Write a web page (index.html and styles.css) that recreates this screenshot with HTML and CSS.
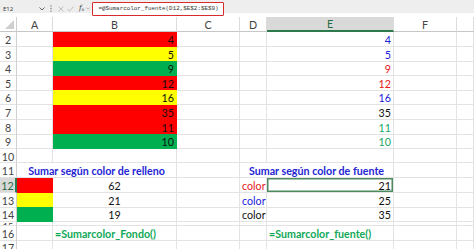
FILE: index.html
```html
<!DOCTYPE html>
<html lang="es">
<head>
<meta charset="utf-8">
<title>Sumar color</title>
<link rel="stylesheet" href="styles.css">
</head>
<body>
<div class="app">
  <div class="fbar">
    <div class="namebox">E12</div>
    <svg class="ico chev" width="6" height="4" viewBox="0 0 6 4"><path d="M0.5 0.5 L3 3 L5.5 0.5" fill="none" stroke="#555" stroke-width="0.9"/></svg>
    <svg class="ico dots" width="2" height="7" viewBox="0 0 2 7"><circle cx="1" cy="1" r="0.7" fill="#777"/><circle cx="1" cy="3.5" r="0.7" fill="#777"/><circle cx="1" cy="6" r="0.7" fill="#777"/></svg>
    <svg class="ico xmark" width="6" height="6" viewBox="0 0 6 6"><path d="M0.5 0.5 L5.5 5.5 M5.5 0.5 L0.5 5.5" fill="none" stroke="#b4b4b4" stroke-width="0.8"/></svg>
    <svg class="ico check" width="7" height="6" viewBox="0 0 7 6"><path d="M0.5 3.2 L2.5 5.2 L6.5 0.6" fill="none" stroke="#b4b4b4" stroke-width="0.8"/></svg>
    <span class="fx">f<sub>x</sub></span>
    <svg class="ico chev2" width="4" height="3" viewBox="0 0 4 3"><path d="M0.3 0.5 L2 2.3 L3.7 0.5" fill="none" stroke="#999" stroke-width="0.7"/></svg>
    <div class="formula">=@Sumarcolor_fuente(D12,$E$2:$E$9)</div>
  </div>

  <div class="sheet">
    <div class="row hdr">
      <div class="corner"><svg width="9" height="9" viewBox="0 0 9 9"><path d="M9 0 L9 9 L0 9 Z" fill="#cfcfcf"/></svg></div>
      <div class="ch">A</div><div class="ch">B</div><div class="ch">C</div><div class="ch">D</div><div class="ch sel">E</div><div class="ch">F</div><div class="ch"></div>
    </div>

    <div class="row r"><div class="rh">2</div><div class="c"></div><div class="c num f-red">4</div><div class="c"></div><div class="c"></div><div class="c num t-blue">4</div><div class="c"></div><div class="c"></div></div>
    <div class="row r"><div class="rh">3</div><div class="c"></div><div class="c num f-yellow">5</div><div class="c"></div><div class="c"></div><div class="c num t-blue">5</div><div class="c"></div><div class="c"></div></div>
    <div class="row r"><div class="rh">4</div><div class="c"></div><div class="c num f-green">9</div><div class="c"></div><div class="c"></div><div class="c num t-red">9</div><div class="c"></div><div class="c"></div></div>
    <div class="row r"><div class="rh">5</div><div class="c"></div><div class="c num f-red">12</div><div class="c"></div><div class="c"></div><div class="c num t-red">12</div><div class="c"></div><div class="c"></div></div>
    <div class="row r"><div class="rh">6</div><div class="c"></div><div class="c num f-yellow">16</div><div class="c"></div><div class="c"></div><div class="c num t-blue">16</div><div class="c"></div><div class="c"></div></div>
    <div class="row r"><div class="rh">7</div><div class="c"></div><div class="c num f-red">35</div><div class="c"></div><div class="c"></div><div class="c num t-black">35</div><div class="c"></div><div class="c"></div></div>
    <div class="row r"><div class="rh">8</div><div class="c"></div><div class="c num f-red">11</div><div class="c"></div><div class="c"></div><div class="c num t-green">11</div><div class="c"></div><div class="c"></div></div>
    <div class="row r"><div class="rh">9</div><div class="c"></div><div class="c num f-green">10</div><div class="c"></div><div class="c"></div><div class="c num t-green">10</div><div class="c"></div><div class="c"></div></div>
    <div class="row r"><div class="rh">10</div><div class="c"></div><div class="c"></div><div class="c"></div><div class="c"></div><div class="c"></div><div class="c"></div><div class="c"></div></div>
    <div class="row r"><div class="rh">11</div><div class="c title span2">Sumar según color de relleno</div><div class="c"></div><div class="c title span2">Sumar según color de fuente</div><div class="c"></div><div class="c"></div></div>
    <div class="row r"><div class="rh rsel">12</div><div class="c f-red"></div><div class="c mid">62</div><div class="c"></div><div class="c lab t-red">color</div><div class="c num selcell">21</div><div class="c"></div><div class="c"></div></div>
    <div class="row r"><div class="rh">13</div><div class="c f-yellow"></div><div class="c mid">21</div><div class="c"></div><div class="c lab t-blue">color</div><div class="c num">25</div><div class="c"></div><div class="c"></div></div>
    <div class="row r"><div class="rh">14</div><div class="c f-green"></div><div class="c mid">19</div><div class="c"></div><div class="c lab t-black">color</div><div class="c num">35</div><div class="c"></div><div class="c"></div></div>
    <div class="row tiny"><div class="rh"><span class="clip">15</span></div><div class="c"></div><div class="c"></div><div class="c"></div><div class="c"></div><div class="c"></div><div class="c"></div><div class="c"></div></div>
    <div class="row r"><div class="rh">16</div><div class="c"></div><div class="c fn">=Sumarcolor_Fondo()</div><div class="c"></div><div class="c"></div><div class="c fn">=Sumarcolor_fuente()</div><div class="c"></div><div class="c"></div></div>
    <div class="row r"><div class="rh">17</div><div class="c"></div><div class="c"></div><div class="c"></div><div class="c"></div><div class="c"></div><div class="c"></div><div class="c"></div></div>
  </div>
</div>
</body>
</html>
```
FILE: styles.css
```css
* { box-sizing: border-box; }
html, body { margin: 0; padding: 0; }
body {
  width: 474px;
  height: 249px;
  overflow: hidden;
  background: #fff;
  font-family: Lato, "Open Sans", sans-serif;
}
.app { width: 474px; height: 249px; overflow: hidden; }

/* formula bar */
.fbar {
  height: 17px;
  display: flex;
  align-items: center;
  background: linear-gradient(#eeeeee 0, #eeeeee 13px, #ffffff 13px);
}
.namebox {
  width: 39px;
  padding-left: 3px;
  font-size: 6px;
  color: #333;
  font-family: "Open Sans", sans-serif;
}
.ico { display: block; flex: none; }
.dots { margin-left: 5px; }
.xmark { margin-left: 6px; }
.check { margin-left: 3px; }
.fx {
  margin-left: 5px;
  font-family: "DejaVu Serif", serif;
  font-style: italic;
  font-size: 7px;
  color: #333;
  line-height: 1;
}
.fx sub { font-size: 5px; vertical-align: -1px; }
.chev2 { margin-left: 2px; }
.formula {
  margin-left: 2px;
  width: 132px;
  height: 14px;
  border: 1.5px solid #d92a2e;
  border-radius: 1px;
  background: #fff;
  display: flex;
  align-items: center;
  padding-left: 5px;
  font-family: "Liberation Mono", monospace;
  font-size: 5.9px;
  color: #333;
  white-space: nowrap;
}

/* sheet grid */
.row {
  display: grid;
  grid-template-columns: 17px 36px 124px 63px 27px 127px 63px 1fr;
}
.hdr { height: 15px; }
.r { height: 14.6px; }
.tiny { height: 4px; overflow: hidden; }

.corner {
  border-right: 1px solid #d0d0d0;
  border-bottom: 1px solid #c6c6c6;
  display: flex;
  align-items: flex-end;
  justify-content: flex-end;
  padding: 0 2px 2px 0;
}
.ch {
  border-right: 1px solid #dcdcdc;
  border-bottom: 1px solid #c6c6c6;
  display: flex;
  align-items: center;
  justify-content: center;
  font-size: 10.7px;
  color: #444;
}
.ch.sel {
  background: #d9d9d9;
  border-bottom: 2px solid #2d7a4d;
  color: #1f6b40;
}

.rh {
  border-right: 1px solid #d0d0d0;
  border-bottom: 1px solid #e2e2e2;
  display: flex;
  align-items: center;
  justify-content: center;
  font-size: 10.7px;
  color: #444;
  padding-top: 1px;
  overflow: hidden;
}
.rh.rsel {
  background: #d9d9d9;
  border-right: 2px solid #2d7a4d;
  color: #1f6b40;
}
.tiny .rh { align-items: flex-start; padding-top: 0; }
.clip { display: block; height: 3px; overflow: hidden; line-height: 10px; font-size: 9px; }

.c {
  border-right: 1px solid #e3e3e3;
  border-bottom: 1px solid #e3e3e3;
  display: flex;
  align-items: center;
  font-size: 10.7px;
  color: #111;
  padding-top: 1px;
  white-space: nowrap;
  overflow: visible;
}
.num { justify-content: flex-end; padding-right: 2px; }
.mid { justify-content: center; }
.lab { padding-left: 2px; overflow: hidden; }
.span2 { grid-column: span 2; }
.title {
  justify-content: center;
  font-weight: 700;
  color: #2424d4;
}
.fn {
  padding-left: 2px;
  font-weight: 700;
  color: #10a858;
}

.f-red { background: #ff0000; border-color: #ff0000; }
.f-yellow { background: #ffff00; border-color: #ffff00; }
.f-green { background: #00b050; border-color: #00b050; }

.t-blue { color: #2020d8; }
.t-red { color: #e8181c; }
.t-black { color: #111; }
.t-green { color: #20a864; }

.selcell {
  box-shadow: inset 0 0 0 1.5px #4e8a60;
}
```
